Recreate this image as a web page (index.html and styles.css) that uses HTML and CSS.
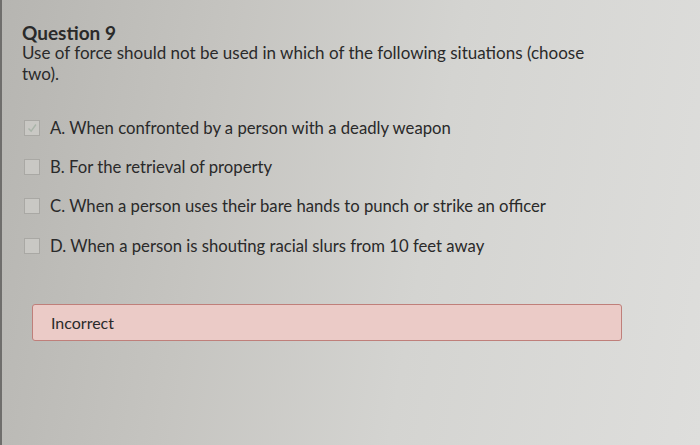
FILE: index.html
```html
<!DOCTYPE html>
<html>
<head>
<meta charset="utf-8">
<link rel="stylesheet" href="styles.css">
</head>
<body>
<div class="page">
  <h2 class="title">Question 9</h2>
  <p class="prompt">Use of force should not be used in which of the following situations (choose two).</p>
  <ul class="options">
    <li class="option"><span class="box checked"><svg viewBox="0 0 16 16" width="16" height="16"><path d="M4 8.5 L7 11.5 L12.5 4" fill="none" stroke="#a9b4a9" stroke-width="1.6"/></svg></span><span>A. When confronted by a person with a deadly weapon</span></li>
    <li class="option"><span class="box"></span><span>B. For the retrieval of property</span></li>
    <li class="option"><span class="box"></span><span>C. When a person uses their bare hands to punch or strike an officer</span></li>
    <li class="option"><span class="box"></span><span>D. When a person is shouting racial slurs from 10 feet away</span></li>
  </ul>
  <div class="result">Incorrect</div>
</div>
</body>
</html>
```
FILE: styles.css
```css
html, body {
  margin: 0;
  padding: 0;
  height: 100%;
}
body {
  width: 700px;
  height: 445px;
  overflow: hidden;
  background: linear-gradient(100deg, #b6b5b1 0%, #c5c4c0 30%, #d4d4d1 60%, #dededc 100%);
  border-left: 2px solid #6f6e6c;
  box-sizing: border-box;
  font-family: Lato, "Open Sans", sans-serif;
  color: #2a2a2a;
}
.page {
  padding: 23px 0 0 20px;
}
.title {
  margin: 0;
  font-size: 19px;
  font-weight: 700;
  line-height: 19px;
}
.prompt {
  margin: 0;
  width: 570px;
  font-size: 17px;
  line-height: 21px;
}
.options {
  list-style: none;
  margin: 24px 0 0 0;
  padding: 0;
}
.option {
  display: flex;
  align-items: center;
  gap: 10px;
  height: 39.3px;
  font-size: 16.7px;
  padding-left: 2px;
}
.box {
  width: 14px;
  height: 14px;
  flex: none;
  border: 1px solid #a9a8a4;
  background: #c9c8c4;
  display: flex;
  align-items: center;
  justify-content: center;
}
.box svg {
  display: block;
}
.result {
  margin: 39px 0 0 10px;
  width: 590px;
  height: 37px;
  box-sizing: border-box;
  padding-left: 18px;
  display: flex;
  align-items: center;
  background: #ebcbc7;
  border: 1px solid #bf7f7a;
  border-radius: 3px;
  font-size: 16px;
}
```
